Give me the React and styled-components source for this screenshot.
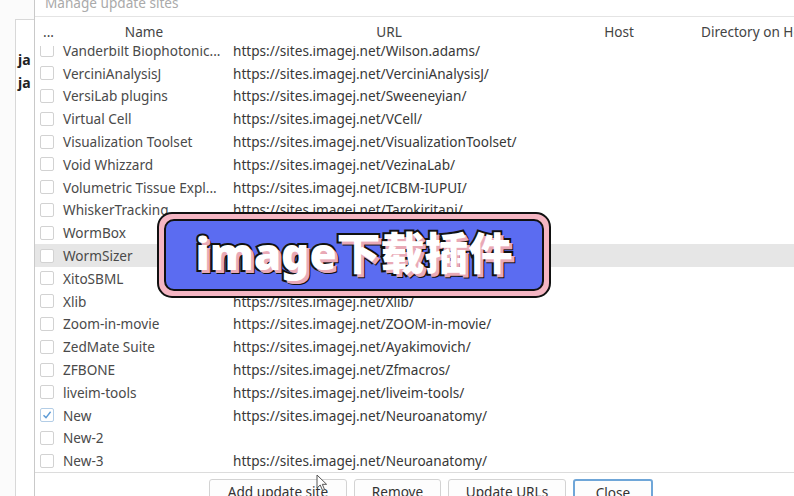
import React from "react";
import styled, { createGlobalStyle } from "styled-components";

const GlobalStyle = createGlobalStyle`
  html, body {
    margin: 0;
    padding: 0;
    background: #ffffff;
  }
  body {
    width: 794px;
    height: 496px;
    overflow: hidden;
    font-family: "Noto Sans", "Open Sans", sans-serif;
  }
`;

const Screen = styled.div`
  position: relative;
  display: flex;
  width: 794px;
  height: 496px;
  overflow: hidden;
  background: #fbfbfb;
`;

const BackWindow = styled.div`
  width: 34px;
  flex-shrink: 0;
  padding-top: 19px;
  padding-left: 15px;
  box-sizing: border-box;
  overflow: hidden;
`;

const BackPanel = styled.div`
  height: 100%;
  border-top: 1px solid #d8d8d8;
  border-left: 1px solid #d8d8d8;
  background: #ffffff;
  padding: 31px 0 0 2px;
  display: flex;
  flex-direction: column;
  gap: 5px;
`;

const BackLabel = styled.div`
  font-family: "Noto Sans", sans-serif;
  font-weight: 700;
  font-size: 14px;
  line-height: 18px;
  color: #222;
  white-space: nowrap;
`;

const Dialog = styled.div`
  flex: 1;
  display: flex;
  flex-direction: column;
  background: #ffffff;
  border-left: 1px solid #c9c9c9;
  min-width: 0;
`;

const TitleBar = styled.div`
  height: 16px;
  flex-shrink: 0;
  border-bottom: 1px solid #e4e4e4;
  padding-left: 10px;
  font-size: 13.6px;
  line-height: 6px;
  color: #aaaaaa;
  overflow: hidden;
  white-space: nowrap;
`;

const Table = styled.div`
  height: 455px;
  flex-shrink: 0;
  display: flex;
  flex-direction: column;
  border-bottom: 1px solid #dcdcdc;
  overflow: hidden;
`;

const cols = "24px 170px 320px 140px 1fr";

const HeaderRow = styled.div`
  position: relative;
  z-index: 1;
  display: grid;
  grid-template-columns: ${cols};
  height: 29px;
  padding-top: 1px;
  padding-bottom: 1px;
  box-sizing: border-box;
  flex-shrink: 0;
  align-items: center;
  background: #ffffff;
  font-size: 13.6px;
  color: #444;
`;

const HeadCell = styled.div`
  text-align: ${(p) => p.$align || "center"};
  padding-left: ${(p) => p.$pad || 0}px;
  white-space: nowrap;
  overflow: hidden;
`;

const Body = styled.div`
  flex: 1;
  overflow: hidden;
`;

const List = styled.div`
  margin-top: -7px;
`;

const Row = styled.div`
  display: grid;
  grid-template-columns: ${cols};
  height: 22.8px;
  align-items: center;
  background: ${(p) => (p.$selected ? "#e6e6e6" : "transparent")};
  font-size: 13.6px;
  white-space: nowrap;
`;

const CheckCell = styled.div`
  display: flex;
  padding-left: 5px;
`;

const Box = styled.span`
  width: 14px;
  height: 14px;
  box-sizing: border-box;
  border: 1px solid ${(p) => (p.$checked ? "#b3cde6" : "#d2d2d2")};
  border-radius: 2px;
  background: #fff;
  display: flex;
  align-items: center;
  justify-content: center;
`;

const NameCell = styled.div`
  padding-left: 4px;
  color: #4a4a4a;
  overflow: hidden;
`;

const UrlCell = styled.div`
  padding-left: 4px;
  color: #383838;
  overflow: hidden;
`;

const Footer = styled.div`
  display: flex;
  gap: 7px;
  padding: 6px 0 0 174px;
`;

const Button = styled.button`
  width: ${(p) => p.$w}px;
  height: 26px;
  box-sizing: border-box;
  background: #fdfdfd;
  border: ${(p) => (p.$focused ? "2px solid #6fa6d8" : "1px solid #d3d3d3")};
  border-radius: 3px;
  font-family: "Noto Sans", sans-serif;
  font-size: 13.6px;
  color: #333;
  padding: 0;
  line-height: 24px;
`;

const Banner = styled.div`
  position: absolute;
  left: 157px;
  top: 212px;
  width: 394px;
  height: 86px;
  box-sizing: border-box;
  border: 2px solid #111;
  border-radius: 15px;
  background: #f5b6c3;
  padding: 5px;
`;

const BannerInner = styled.div`
  height: 100%;
  box-sizing: border-box;
  border: 2px solid #111;
  border-radius: 10px;
  background: #5b6cf1;
  display: flex;
  align-items: center;
  justify-content: center;
`;

const BannerText = styled.span`
  font-family: "Noto Sans", "Noto Sans CJK SC", sans-serif;
  font-weight: 900;
  font-size: 44px;
  line-height: 1;
  color: #ffffff;
  -webkit-text-stroke: 4px #111;
  paint-order: stroke fill;
  text-shadow: 3px 3px 0 #e9a9b6, 4px 4px 0 #111;
  margin-top: -4px;
`;

const Cursor = styled.svg`
  position: absolute;
  left: 316px;
  top: 474px;
`;

const rows = [
  ["Vanderbilt Biophotonic...", "https://sites.imagej.net/Wilson.adams/"],
  ["VerciniAnalysisJ", "https://sites.imagej.net/VerciniAnalysisJ/"],
  ["VersiLab plugins", "https://sites.imagej.net/Sweeneyian/"],
  ["Virtual Cell", "https://sites.imagej.net/VCell/"],
  ["Visualization Toolset", "https://sites.imagej.net/VisualizationToolset/"],
  ["Void Whizzard", "https://sites.imagej.net/VezinaLab/"],
  ["Volumetric Tissue Expl...", "https://sites.imagej.net/ICBM-IUPUI/"],
  ["WhiskerTracking", "https://sites.imagej.net/Tarokiritani/"],
  ["WormBox", "https://sites.imagej.net/WormBox/"],
  ["WormSizer", "https://sites.imagej.net/WormSizer/", true],
  ["XitoSBML", "https://sites.imagej.net/XitoSBML/"],
  ["Xlib", "https://sites.imagej.net/Xlib/"],
  ["Zoom-in-movie", "https://sites.imagej.net/ZOOM-in-movie/"],
  ["ZedMate Suite", "https://sites.imagej.net/Ayakimovich/"],
  ["ZFBONE", "https://sites.imagej.net/Zfmacros/"],
  ["liveim-tools", "https://sites.imagej.net/liveim-tools/"],
  ["New", "https://sites.imagej.net/Neuroanatomy/", false, true],
  ["New-2", ""],
  ["New-3", "https://sites.imagej.net/Neuroanatomy/"],
];

function Check({ checked }) {
  return (
    <Box $checked={checked}>
      {checked && (
        <svg width="10" height="10" viewBox="0 0 10 10">
          <path d="M1.5 5.2 L4 7.6 L8.6 1.8" fill="none" stroke="#5d9bd6" strokeWidth="1.4" />
        </svg>
      )}
    </Box>
  );
}

export default function App() {
  return (
    <>
      <GlobalStyle />
      <Screen>
        <BackWindow>
          <BackPanel>
            <BackLabel>ja</BackLabel>
            <BackLabel>ja</BackLabel>
          </BackPanel>
        </BackWindow>
        <Dialog>
          <TitleBar>Manage update sites</TitleBar>
          <Table>
            <HeaderRow>
              <HeadCell $align="left" $pad={8}>...</HeadCell>
              <HeadCell>Name</HeadCell>
              <HeadCell>URL</HeadCell>
              <HeadCell>Host</HeadCell>
              <HeadCell $align="left" $pad={12}>Directory on Host</HeadCell>
            </HeaderRow>
            <Body>
              <List>
                {rows.map(([name, url, selected, checked]) => (
                  <Row key={name} $selected={selected}>
                    <CheckCell>
                      <Check checked={checked} />
                    </CheckCell>
                    <NameCell>{name}</NameCell>
                    <UrlCell>{url}</UrlCell>
                    <div />
                    <div />
                  </Row>
                ))}
              </List>
            </Body>
          </Table>
          <Footer>
            <Button $w={138}>Add update site</Button>
            <Button $w={87}>Remove</Button>
            <Button $w={118}>Update URLs</Button>
            <Button $w={80} $focused>Close</Button>
          </Footer>
        </Dialog>
        <Banner>
          <BannerInner>
            <BannerText>image下载插件</BannerText>
          </BannerInner>
        </Banner>
        <Cursor width="12" height="18" viewBox="0 0 12 18">
          <path d="M1 1 L1 14 L4.2 11 L6.6 16.5 L8.6 15.6 L6.3 10.3 L10.6 10.3 Z" fill="#fff" stroke="#555" strokeWidth="1" />
        </Cursor>
      </Screen>
    </>
  );
}
